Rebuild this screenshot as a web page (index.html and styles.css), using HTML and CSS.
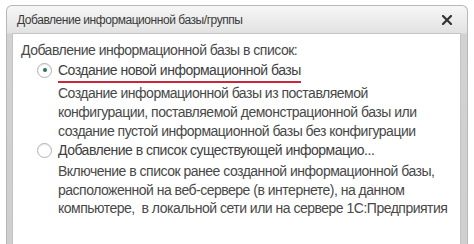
FILE: index.html
```html
<!DOCTYPE html>
<html lang="ru">
<head>
<meta charset="utf-8">
<link rel="stylesheet" href="styles.css">
</head>
<body>
<div class="window">
  <div class="titlebar">
    <span class="title">Добавление информационной базы/группы</span>
    <svg class="close" width="10" height="10" viewBox="0 0 10 10"><path d="M1 1L9 9M9 1L1 9" stroke="#333" stroke-width="2.2" stroke-linecap="square"/></svg>
  </div>
  <div class="content">
    <div class="heading">Добавление информационной базы в список:</div>
    <div class="option">
      <span class="radio checked"></span>
      <span class="label underlined">Создание новой информационной базы</span>
    </div>
    <div class="desc">Создание информационной базы из поставляемой<br>конфигурации, поставляемой демонстрационной базы или<br>создание пустой информационной базы без конфигурации</div>
    <div class="option second">
      <span class="radio"></span>
      <span class="label">Добавление в список существующей информацио...</span>
    </div>
    <div class="desc second">Включение в список ранее созданной информационной базы,<br>расположенной на веб-сервере (в интернете), на данном<br>компьютере,&nbsp; в локальной сети или на сервере 1С:Предприятия</div>
  </div>
</div>
</body>
</html>
```
FILE: styles.css
```css
html, body {
  margin: 0;
  padding: 0;
  background: #fff;
  overflow: hidden;
}
body {
  font-family: "Liberation Sans", Arial, sans-serif;
  color: #404040;
}
.window {
  margin: 5px 0 0 6px;
  width: 462px;
  height: 239px;
  border: 1px solid #b8b8b8;
  border-bottom: none;
  border-radius: 6px 6px 0 0;
  background: linear-gradient(#f6f6f6 0, #e2e2e2 27px, #d2d2d2 28px, #cfcfcf 100%);
  padding: 0 6px 0 5px;
  box-sizing: border-box;
  overflow: hidden;
}
.titlebar {
  height: 27px;
  display: flex;
  align-items: center;
  justify-content: space-between;
  padding: 0 5px;
}
.title {
  font-size: 12px;
  color: #3a3a3a;
  letter-spacing: -0.45px;
  padding-top: 1px;
}
.close {
  margin-right: 4px;
  margin-top: 1px;
}
.content {
  background: #fff;
  height: 212px;
  border: 1px solid #c4c4c4;
  border-bottom: none;
  padding: 6px 0 0 8px;
  box-sizing: border-box;
}
.heading,
.label,
.desc {
  font-size: 14px;
  letter-spacing: -0.5px;
}
.heading {
  line-height: 20px;
  color: #484848;
}
.option {
  display: flex;
  align-items: center;
  margin-top: 0;
  padding-left: 16px;
  height: 20px;
}
.option.second {
  margin-top: -1px;
}
.radio {
  width: 15px;
  height: 15px;
  border: 1px solid #b0b0b0;
  border-radius: 50%;
  background: #fff;
  box-shadow: inset 0 1px 1px rgba(0,0,0,0.08);
  position: relative;
  margin-right: 6px;
  flex: none;
  box-sizing: border-box;
}
.radio.checked::after {
  content: "";
  position: absolute;
  left: 4.5px;
  top: 4.5px;
  width: 4px;
  height: 4px;
  border-radius: 50%;
  background: #1f7a4c;
}
.label {
  line-height: 20px;
  color: #404040;
}
.underlined {
  position: relative;
}
.underlined::after {
  content: "";
  position: absolute;
  left: 0;
  right: 0;
  bottom: -3px;
  height: 2px;
  background: #c8283a;
}
.desc {
  line-height: 19px;
  color: #484848;
  padding-left: 37px;
  margin-top: 4px;
  margin-bottom: 0;
}
.desc.second {
  margin-top: 2px;
  line-height: 18.5px;
}
```
